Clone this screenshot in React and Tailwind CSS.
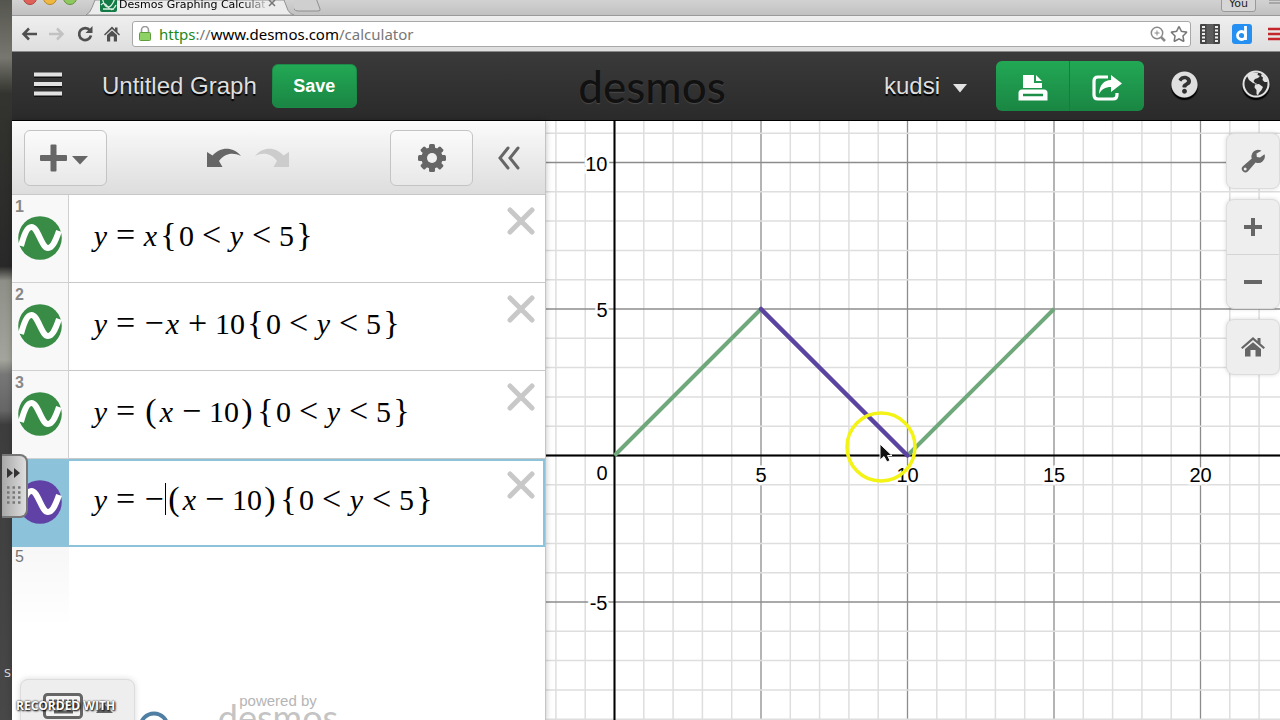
import React, { useState } from "react";
import { FaQuestionCircle, FaRegStar } from "react-icons/fa";

const UNIT = 29.3;
const ORIGIN = { x: 68.5, y: 334.5 };

const px = (x) => ORIGIN.x + x * UNIT;
const py = (y) => ORIGIN.y - y * UNIT;

// token kinds: v = variable, n = number, o = binary operator, u = unary minus, b = brace, p = paren, c = caret
const RANGE = [["b", "{"], ["n", "0"], ["o", "<"], ["v", "y"], ["o", "<"], ["n", "5"], ["b", "}"]];

const EXPRESSIONS = [
  { id: 1, color: "#388c46", tokens: [["v", "y"], ["o", "="], ["v", "x"], ...RANGE] },
  {
    id: 2,
    color: "#388c46",
    tokens: [["v", "y"], ["o", "="], ["u", "−"], ["v", "x"], ["o", "+"], ["n", "10"], ...RANGE]
  },
  {
    id: 3,
    color: "#388c46",
    tokens: [["v", "y"], ["o", "="], ["p", "("], ["v", "x"], ["o", "−"], ["n", "10"], ["p", ")"], ...RANGE]
  },
  {
    id: 4,
    color: "#6042a6",
    tokens: [["v", "y"], ["o", "="], ["u", "−"], ["c", ""], ["p", "("], ["v", "x"], ["o", "−"], ["n", "10"], ["p", ")"], ...RANGE]
  }
];

const TOKEN_CLASS = {
  v: "w-[15px] text-center italic text-[30px]",
  n: "text-[30px]",
  o: "w-[35px] text-center text-[34px]",
  u: "w-[22px] text-center text-[34px]",
  b: "w-[21px] text-center text-[34px]",
  p: "w-[16px] text-center text-[34px]",
  c: "h-8 w-px bg-black self-center"
};

function MathLine({ tokens }) {
  return (
    <div className="flex h-10 items-baseline leading-10 text-black font-['Liberation_Serif',serif]">
      {tokens.map(([kind, text], i) => (
        <span key={i} className={TOKEN_CLASS[kind]}>{text}</span>
      ))}
    </div>
  );
}

function CurveIcon({ color }) {
  return (
    <svg width="44" height="44" viewBox="0 0 44 44">
      <circle cx="22" cy="22" r="21.8" fill={color} />
      <path d="M3 30 C6 19 9 11 13.500 11 C20 11 23.500 32 30 32 C34.500 32 37.500 25 41 15" fill="none" stroke="#fff" strokeWidth="6" />
    </svg>
  );
}

function Gear() {
  return (
    <svg width="28" height="28" viewBox="-14 -14 28 28" fill="#666">
      {[0, 45, 90, 135].map((a) => (
        <rect key={a} x="-3" y="-14" width="6" height="28" rx="1.500" transform={`rotate(${a})`} />
      ))}
      <circle r="7.700" fill="none" stroke="#666" strokeWidth="6" />
      <circle r="5" fill="#f1f1f1" />
    </svg>
  );
}

function BrowserTabs() {
  return (
    <div className="flex h-4 items-end overflow-hidden border-b border-[#9a9a9a] bg-gradient-to-b from-[#d2d2d2] to-[#c1c1c1]">
      <svg width="74" height="15" viewBox="0 0 74 15" className="shrink-0">
        <circle cx="18" cy="-2" r="6.500" fill="#e0615a" stroke="#a8453f" />
        <circle cx="38" cy="-2" r="6.500" fill="#f0b840" stroke="#b5862b" />
        <circle cx="58" cy="-2" r="6.500" fill="#90c860" stroke="#649244" />
      </svg>
      <div className="relative flex h-full w-52 shrink-0 items-end">
        <svg className="absolute inset-0 h-full w-full" viewBox="0 0 208 16" preserveAspectRatio="none">
          <path d="M0 16 Q4 14 6 8 L9 0 H198 L202 11 Q204 15 208 16 Z" fill="#ececec" stroke="#8f8f8f" />
        </svg>
        <svg className="relative ml-[14px] mb-[3px]" width="17" height="16" viewBox="0 0 17 16">
          <rect width="17" height="16" rx="2" fill="#127a45" />
          <path d="M2 1 Q4 11 8 11 T15 2 M1 9 Q4 5 8 11 T16 9 M3 13 H14" fill="none" stroke="#d8efe0" strokeWidth="1.300" />
        </svg>
        <span className="relative ml-[2px] w-[146px] whitespace-nowrap bg-gradient-to-r from-black from-80% to-[#bbb] bg-clip-text text-[11px] leading-5 text-transparent font-['DejaVu_Sans',sans-serif]">
          Desmos Graphing Calculat
        </span>
        <button aria-label="Close tab" className="relative mb-2 ml-[3px]">
          <svg width="8" height="8" viewBox="0 0 8 8" stroke="#777" strokeWidth="1.500">
            <path d="M1 1 L7 7 M7 1 L1 7" />
          </svg>
        </button>
      </div>
      <svg width="34" height="15" viewBox="0 0 34 15" className="shrink-0">
        <path d="M-4 -2 L0 9 Q1 11 4 11 H24 Q27 11 26 9 L22 -2" fill="#cfcfcf" stroke="#8f8f8f" />
      </svg>
      <button className="mb-[3px] ml-auto h-4 w-[35px] rounded-[3px] border border-[#999] bg-[#d6d6d6] text-[11px] leading-[2px] text-[#222] font-['DejaVu_Sans',sans-serif]">
        You
      </button>
      <svg width="12" height="15" viewBox="0 0 12 15" className="ml-3 shrink-0">
        <path d="M1 0 H12 M1 3 H12" stroke="#999" strokeWidth="1.500" />
      </svg>
    </div>
  );
}

function AddressBar() {
  return (
    <div className="flex h-9 items-center overflow-hidden border-b border-[#888] bg-gradient-to-b from-[#efefef] to-[#dedede] pl-2">
      <button aria-label="Back" className="w-7">
        <svg width="18" height="16" viewBox="0 0 18 16" fill="none" stroke="#505050" strokeWidth="2.500">
          <path d="M17 8 H4 M9 2.500 L3.500 8 L9 13.500" />
        </svg>
      </button>
      <button aria-label="Forward" className="w-7">
        <svg width="18" height="16" viewBox="0 0 18 16" fill="none" stroke="#c2c2c2" strokeWidth="2.500">
          <path d="M1 8 H14 M9 2.500 L14.500 8 L9 13.500" />
        </svg>
      </button>
      <button aria-label="Reload" className="w-7">
        <svg width="18" height="18" viewBox="0 0 18 18">
          <path d="M14 5.500 A6 6 0 1 0 15 10.500" fill="none" stroke="#505050" strokeWidth="2.700" />
          <path d="M16.500 1 V8 H9.500 Z" fill="#505050" />
        </svg>
      </button>
      <button aria-label="Home page" className="w-7">
        <svg width="16" height="16" viewBox="0 0 16 16" fill="#505050">
          <path d="M8 .5 L11 3.500 V1.500 H13.500 V6 L16 8.500 L15 9.500 L8 3 L1 9.500 L0 8.500 Z" />
          <path d="M3 9 L8 4.500 L13 9 V15.500 H9.800 V10.500 H6.200 V15.500 H3 Z" />
        </svg>
      </button>
      <div className="flex h-[26px] flex-1 items-center rounded-[3px] border border-[#a8a8a8] bg-white px-[6px]">
        <svg width="12" height="15" viewBox="0 0 12 15">
          <path d="M2.500 7 V4 A3.500 3.500 0 0 1 9.500 4 V7" fill="none" stroke="#9a9a9a" strokeWidth="1.600" />
          <rect x=".5" y="6.500" width="11" height="8" rx="1" fill="#8ed164" stroke="#5f9c3b" />
        </svg>
        <span className="ml-2 text-[15px] leading-6 text-[#777] font-['Noto_Sans',sans-serif]">
          <span className="text-[#1b8a1b]">https</span>://<span className="text-black">www.desmos.com</span>/calculator
        </span>
        <button aria-label="Zoom" className="ml-auto">
          <svg width="16" height="16" viewBox="0 0 16 16" fill="none" stroke="#8a8a8a">
            <circle cx="7" cy="7" r="5.700" strokeWidth="1.500" />
            <path d="M11 11 L15 15" strokeWidth="2.500" />
            <path d="M4.500 7 H9.500 M7 4.500 V9.500" />
          </svg>
        </button>
        <button aria-label="Bookmark" className="-mr-1 ml-1"><FaRegStar size={18} color="#777" /></button>
      </div>
      <svg width="20" height="20" viewBox="0 0 20 20" className="ml-[9px] shrink-0">
        <rect width="20" height="20" rx="1" fill="#454545" />
        <path d="M3.500 2 V18 M16.500 2 V18" stroke="#eee" strokeWidth="3" strokeDasharray="2 1.500" />
        <rect x="6.500" width="7" height="20" fill="#5c5c5c" />
      </svg>
      <svg width="20" height="20" viewBox="0 0 20 20" className="ml-3 shrink-0">
        <rect width="20" height="20" rx="3" fill="#2590f2" />
        <circle cx="9.500" cy="11.500" r="4" fill="none" stroke="#fff" strokeWidth="2.800" />
        <path d="M13.500 2 V16" stroke="#fff" strokeWidth="2.800" />
      </svg>
      <svg width="12" height="14" viewBox="0 0 12 14" className="ml-4 shrink-0">
        <path d="M0 2 H12 M0 7 H12 M0 12 H12" stroke="#c5262b" strokeWidth="2.500" />
      </svg>
    </div>
  );
}

function Header() {
  return (
    <header className="grid h-[69px] grid-cols-[1fr_auto_1fr] items-center border-b border-black bg-gradient-to-b from-[#3a3a3a] to-[#2a2a2a] pl-3 text-[#dfdfdf] font-['Liberation_Sans',Arial,sans-serif]">
      <div className="flex items-center">
        <button aria-label="Menu" className="ml-[10px]">
          <svg width="28" height="28" viewBox="0 0 28 28">
            <path d="M0 4 H28 M0 13.500 H28 M0 23 H28" stroke="#111" strokeWidth="4" />
            <path d="M0 2.500 H28 M0 12 H28 M0 21.500 H28" stroke="#e2e2e2" strokeWidth="4" />
          </svg>
        </button>
        <h1 className="ml-10 text-2xl leading-8 [text-shadow:0_2px_1px_#000]">Untitled Graph</h1>
        <button className="ml-[15px] h-11 w-[85px] rounded-md border border-[#1d8b48] bg-gradient-to-b from-[#22a855] to-[#1a8643] text-lg font-bold text-white">
          Save
        </button>
      </div>
      <div className="text-[44px] leading-[60px] font-medium text-[#111] [text-shadow:0_1px_1px_#4a4a4a] font-['Lato',sans-serif]">desmos</div>
      <div className="flex items-center justify-end">
        <button className="flex items-center text-2xl leading-8 [text-shadow:0_2px_1px_#000]">
          kudsi
          <svg width="16" height="10" viewBox="0 0 16 10" className="ml-3 mt-1">
            <path d="M1 1 H15 L8 9.500 Z" fill="#e2e2e2" />
          </svg>
        </button>
        <div className="ml-7 flex h-[50px] overflow-hidden rounded-md bg-gradient-to-b from-[#22a855] to-[#1a8643]">
          <button aria-label="Print" className="flex w-[74px] items-center justify-center border-r border-[#197c3f] pt-1">
            <svg width="30" height="26" viewBox="0 0 30 26">
              <path d="M5 0 H16 V8 H24 V13 H5 Z M18 0 L24 6 H18 Z" fill="#fff" />
              <path d="M4 14.500 H26 Q29.500 14.500 29.500 18 V25.500 H.5 V18 Q.5 14.500 4 14.500 Z" fill="#fff" />
              <path d="M5 20 H25" stroke="#1c9049" strokeWidth="2.500" />
            </svg>
          </button>
          <button aria-label="Share" className="flex w-[74px] items-center justify-center pt-1">
            <svg width="30" height="26" viewBox="0 0 30 26">
              <path d="M16 2 H6 Q2 2 2 6 V20 Q2 24 6 24 H21 Q25 24 25 20 V18" fill="none" stroke="#fff" strokeWidth="3.200" />
              <path d="M19 0 L30 8.500 L19 17 V12 C13 12 10 14 7 19 C7.500 10 12 5 19 5 Z" fill="#fff" />
            </svg>
          </button>
        </div>
        <button aria-label="Help" className="mb-1 ml-[27px] rounded-full shadow-[0_2px_1px_#000]"><FaQuestionCircle size={27} /></button>
        <button aria-label="Language" className="mb-1 ml-11 mr-[10px] rounded-full shadow-[0_2px_1px_#000]">
          <svg width="28" height="28" viewBox="0 0 28 28">
            <circle cx="14" cy="14" r="12.500" fill="#2c2c2c" stroke="#e2e2e2" strokeWidth="2" />
            <path d="M5 6 L8 3 L12 2.500 L16 3 L15.500 5 L18 6 L16 8 L13 9 L11.500 11 L13 13 L15 13.500 L14 14 L11 13 L7 10 Z" fill="#e2e2e2" />
            <path d="M13 14.500 L17 14 L21 17 L19.500 20 L17 23 L16 25.500 L14.500 24 L14.500 20 L12.500 17.500 Z" fill="#e2e2e2" />
            <path d="M20 3.500 L24.500 8 L25.500 12 L22.500 12 L20.500 10 L21 7.500 L19 6 Z" fill="#e2e2e2" />
          </svg>
        </button>
      </div>
    </header>
  );
}

function PanelToolbar() {
  const box = "flex h-14 items-center justify-center rounded-md border border-[#c4c4c4] bg-gradient-to-b from-[#fbfbfb] to-[#e8e8e8]";
  return (
    <div className="flex h-[74px] items-center border-b border-[#c8c8c8] bg-gradient-to-b from-[#fbfbfb] to-[#dddddd] px-3">
      <button aria-label="Add item" className={`${box} w-[83px] pr-1`}>
        <svg width="48" height="28" viewBox="0 0 48 28" fill="#666">
          <rect y="11" width="27" height="6" rx="1" />
          <rect x="10.500" y=".5" width="6" height="27" rx="1" />
          <path d="M32 12 H48 L40 20.500 Z" />
        </svg>
      </button>
      <button aria-label="Undo" className="ml-[100px]">
        <svg width="34" height="20" viewBox="0 0 34 20" fill="#666">
          <path d="M0 4 L5.500 7.500 C13 -1.500 26 -2 34 8 C26 4 18 5 12 13 L15.500 19 H0 Z" />
        </svg>
      </button>
      <button aria-label="Redo" className="ml-[14px]">
        <svg width="34" height="20" viewBox="0 0 34 20" fill="#ccc">
          <path d="M34 4 L28.500 7.500 C21 -1.500 8 -2 0 8 C8 4 16 5 22 13 L18.500 19 H34 Z" />
        </svg>
      </button>
      <button aria-label="Edit list" className={`${box} ml-auto w-[83px]`}><Gear /></button>
      <button aria-label="Hide list" className="ml-6 mr-3">
        <svg width="24" height="24" viewBox="0 0 24 24" fill="none" stroke="#666" strokeWidth="3" strokeLinecap="round">
          <path d="M11 2 L3 12 L11 22 M21 2 L13 12 L21 22" />
        </svg>
      </button>
    </div>
  );
}

function ExpressionRow({ item, active, onSelect, onRemove }) {
  return (
    <li className={`flex h-22 ${active ? "bg-[#8dc3da]" : ""}`} onClick={onSelect}>
      <div className={`w-[57px] shrink-0 border-r pl-[6px] ${active ? "border-[#8dc3da]" : "border-b border-[#d0d0d0] bg-[#f8f8f8]"}`}>
        <div className="-ml-[3px] h-[21px] pt-1 text-base leading-4 font-bold text-[#888] font-['Liberation_Sans',Arial,sans-serif]">
          {active ? "" : item.id}
        </div>
        <CurveIcon color={item.color} />
      </div>
      <div className={`flex flex-1 items-start justify-between bg-white pl-6 ${active ? "border-y-2 border-r-2 border-[#8dc3da]" : "border-b border-[#c8c8c8] pt-[2px] pr-[2px]"}`}>
        <div className="mt-[18px]"><MathLine tokens={item.tokens} /></div>
        <button aria-label={`Delete expression ${item.id}`} className="mt-[10px] mr-2" onClick={onRemove}>
          <svg width="28" height="28" viewBox="0 0 28 28" stroke="#c8c8c8" strokeWidth="5" strokeLinecap="round">
            <path d="M3 3 L25 25 M25 3 L3 25" />
          </svg>
        </button>
      </div>
    </li>
  );
}

function ExpressionPanel() {
  const [items, setItems] = useState(EXPRESSIONS);
  const [active, setActive] = useState(4);

  return (
    <section className="relative z-10 flex w-[534px] shrink-0 flex-col overflow-hidden border-r border-[#c4c4c4] bg-white shadow-[0_0_6px_rgba(0,0,0,0.25)]">
      <PanelToolbar />
      <ul>
        {items.map((item) => (
          <ExpressionRow
            key={item.id}
            item={item}
            active={active === item.id}
            onSelect={() => setActive(item.id)}
            onRemove={() => setItems((prev) => prev.filter((p) => p.id !== item.id))}
          />
        ))}
      </ul>
      <div className="h-20 w-[57px] bg-gradient-to-b from-[#f7f7f7] to-white pt-[2px] pl-[3px] text-base leading-4 font-normal text-[#777] font-['Liberation_Sans',Arial,sans-serif]">
        5
      </div>
      <div className="mt-auto flex h-[41px] items-start pl-2">
        <button aria-label="Show keypad" className="flex h-16 w-[115px] shrink-0 items-start rounded-lg border border-[#dcdcdc] bg-[#eeeeee] pt-[13px] pl-[22px] shadow-[0_0_6px_rgba(0,0,0,0.15)]">
          <svg width="72" height="26" viewBox="0 0 72 26">
            <rect x="1.500" y="1.500" width="37" height="23" rx="3" fill="#f4f4f4" stroke="#666" strokeWidth="3" />
            <path d="M6 8 H35 M6 13 H35" stroke="#666" strokeWidth="3" strokeDasharray="3 2" />
            <path d="M11 19 H30" stroke="#666" strokeWidth="3" />
            <path d="M53 20 H70 L61 11 Z" fill="#666" />
          </svg>
        </button>
        <svg width="30" height="41" viewBox="0 0 30 41" className="ml-1">
          <circle cx="15" cy="48" r="13.500" fill="none" stroke="#4f7fa3" strokeWidth="4" />
        </svg>
        <div className="ml-12 flex w-[122px] flex-col items-center pt-[14px] text-[#b5b5b5]">
          <span className="text-[15px] leading-4 font-['Liberation_Sans',Arial,sans-serif]">powered by</span>
          <span className="text-[36px] leading-4 text-[#c4c4c4] font-['Lato',sans-serif]">desmos</span>
        </div>
      </div>
    </section>
  );
}

const range = (from, to) => Array.from({ length: to - from + 1 }, (_, i) => from + i);

function Graph() {
  const label = "text-xl fill-black stroke-white stroke-[5px] [paint-order:stroke] font-['Liberation_Sans',Arial,sans-serif]";
  return (
    <svg className="h-full w-full bg-white">
      {range(-2, 60).map((x) => (
        <line key={`x${x}`} x1={px(x)} x2={px(x)} y1="0" y2="100%" stroke={x % 5 ? "#dedede" : "#8c8c8c"} strokeWidth={x % 5 ? 1.5 : 1.3} />
      ))}
      {range(-40, 11).map((y) => (
        <line key={`y${y}`} x1="0" x2="100%" y1={py(y)} y2={py(y)} stroke={y % 5 ? "#dedede" : "#8c8c8c"} strokeWidth={y % 5 ? 1.5 : 1.3} />
      ))}
      <line x1={px(0)} x2={px(0)} y1="0" y2="100%" stroke="#000" strokeWidth="2" />
      <line x1="0" x2="100%" y1={py(0)} y2={py(0)} stroke="#000" strokeWidth="2" />
      {[5, 10, 15, 20].map((x) => (
        <text key={x} x={px(x)} y={py(0) + 26} textAnchor="middle" className={label}>{x}</text>
      ))}
      {[10, 5, -5].map((y) => (
        <text key={y} x={px(0) - 7} y={py(y) + 8} textAnchor="end" className={label}>{y}</text>
      ))}
      <text x={px(0) - 7} y={py(0) + 24} textAnchor="end" className={label}>0</text>
      <path d={`M${px(0)} ${py(0)} L${px(5)} ${py(5)} M${px(10)} ${py(0)} L${px(15)} ${py(5)}`} stroke="#6fa87a" strokeWidth="4" fill="none" />
      <path d={`M${px(5)} ${py(5)} L${px(10)} ${py(0)}`} stroke="#5a44a0" strokeWidth="4.500" strokeLinecap="round" />
      <circle cx="335" cy="326" r="34" fill="none" stroke="#f3f315" strokeWidth="3.500" />
      <path d="M334 323 V339 L338 335.500 L341 341 L344 339.500 L341.500 334.500 H346 Z" fill="#111" stroke="#fff" strokeWidth="1" />
    </svg>
  );
}

function GraphControls() {
  const card = "flex flex-col overflow-hidden rounded-lg border border-[#dcdcdc] bg-[#eeeeee] shadow-[0_0_4px_rgba(0,0,0,0.15)]";
  const cell = "flex h-[54px] w-13 items-center justify-center";
  return (
    <div className="absolute top-3 right-0 flex flex-col gap-[10px]">
      <div className={card}>
        <button aria-label="Graph settings" className={cell}>
          <svg width="24" height="24" viewBox="0 0 24 24" fill="#666">
            <path d="M20.500 1.800 A6.600 6.600 0 0 0 10.800 9.600 L1.600 17.400 A3.700 3.700 0 0 0 6.800 22.600 L14.600 13.400 A6.600 6.600 0 0 0 23.500 5.200 L19 8.600 L15.800 7.900 L15.500 4.600 Z" />
            <circle cx="4.200" cy="20" r="1.500" fill="#eee" />
          </svg>
        </button>
      </div>
      <div className={card}>
        <button aria-label="Zoom in" className={cell}>
          <svg width="18" height="18" viewBox="0 0 18 18"><path d="M0 9 H18 M9 0 V18" stroke="#666" strokeWidth="4" /></svg>
        </button>
        <button aria-label="Zoom out" className={`${cell} border-t border-[#d4d4d4]`}>
          <svg width="18" height="18" viewBox="0 0 18 18"><path d="M0 9 H18" stroke="#666" strokeWidth="4" /></svg>
        </button>
      </div>
      <div className={card}>
        <button aria-label="Default view" className={cell}>
          <svg width="24" height="20" viewBox="0 0 24 20" fill="#666">
            <path d="M12 0 L16.500 4 V1 H19.500 V6.500 L24 10.500 L22.500 12 L12 3 L1.500 12 L0 10.500 Z" />
            <path d="M4 12 L12 5.200 L20 12 V19.500 H14.500 V13 H9.500 V19.500 H4 Z" />
          </svg>
        </button>
      </div>
    </div>
  );
}

export default function App() {
  return (
    <div className="relative flex h-screen overflow-hidden bg-white">
      <div className="flex w-3 shrink-0 flex-col justify-end bg-[linear-gradient(#55554f_0%,#77776f_8%,#33332f_13%,#292929_37%,#8e8f86_39%,#a3a49b_50%,#777_52%,#666_57%,#3d3d3d_59%,#484848_100%)] pb-9 pl-1 text-[11px] leading-5 text-[#ddd] font-['DejaVu_Sans',sans-serif]">
        S
      </div>
      <div className="flex min-w-0 flex-1 flex-col">
        <BrowserTabs />
        <AddressBar />
        <Header />
        <main className="flex min-h-0 flex-1">
          <ExpressionPanel />
          <div className="relative min-w-0 flex-1">
            <Graph />
            <GraphControls />
          </div>
        </main>
      </div>

      {/* Screen recorder drawer and watermark, both float above the page */}
      <button aria-label="Open drawer" className="absolute top-[454px] left-[2px] z-20 flex h-16 w-[26px] flex-col items-center gap-2 rounded-r-lg border-2 border-l-0 border-[#777] bg-gradient-to-r from-[#a8a8a8] to-[#dedede] pt-3">
        <svg width="14" height="10" viewBox="0 0 14 10" fill="#333"><path d="M0 0 L6 5 L0 10 Z M7 0 L13 5 L7 10 Z" /></svg>
        <svg width="14" height="18" viewBox="0 0 14 18">
          <path d="M0 1.500 H14 M0 6.500 H14 M0 11.500 H14 M0 16.500 H14" stroke="#777" strokeWidth="2.500" strokeDasharray="2.500 3" />
        </svg>
      </button>
      <div className="absolute bottom-1 left-4 z-20 text-[12px] leading-5 font-bold text-white [text-shadow:1px_1px_2px_#000,0_0_2px_#000] font-['Open_Sans',sans-serif]">
        RECORDED WITH
      </div>
    </div>
  );
}
